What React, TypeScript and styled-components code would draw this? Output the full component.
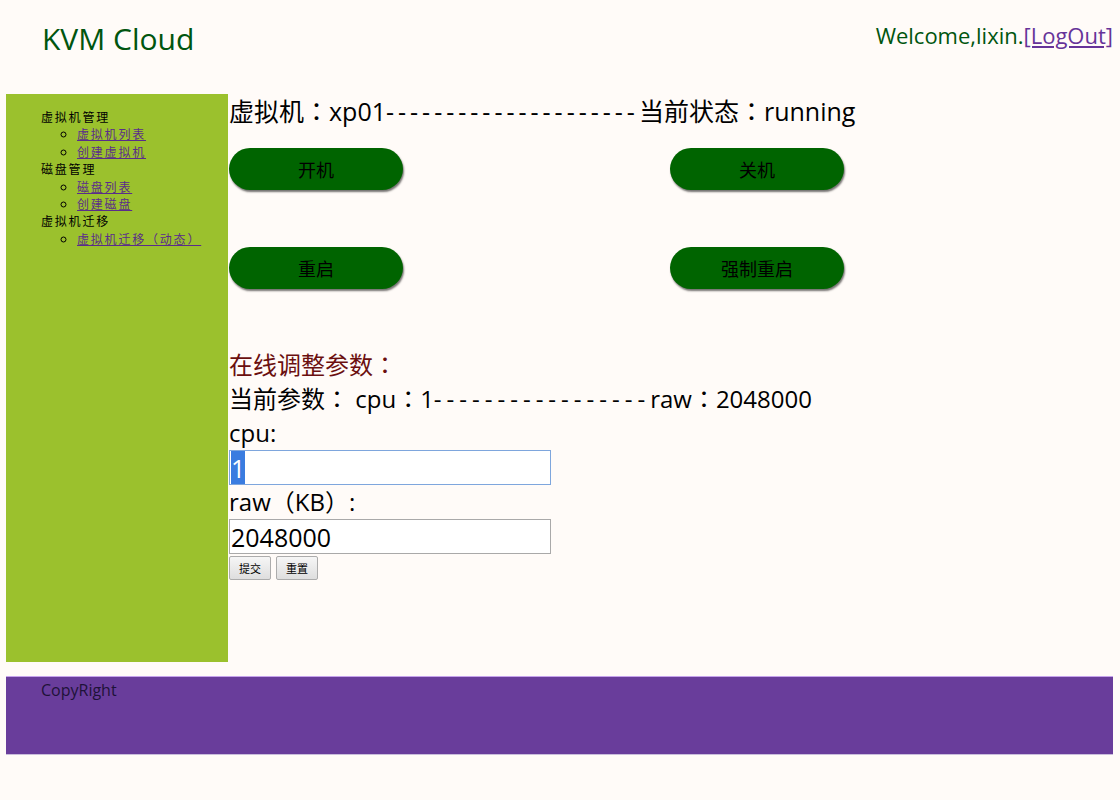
import React, { useEffect, useRef } from 'react'
import styled, { createGlobalStyle } from 'styled-components'

const GlobalStyle = createGlobalStyle`
  html, body {
    margin: 0;
    padding: 0;
    background: #fffbf8;
  }
  body {
    font-family: "Open Sans", "Noto Sans", "Noto Sans CJK TC", sans-serif;
  }
`

const Wrap = styled.div`
  margin: 0 7px 0 6px;
`

const Header = styled.header`
  height: 94px;
  display: flex;
  justify-content: space-between;
  align-items: flex-start;
`

const Logo = styled.h1`
  margin: 19px 0 0 36px;
  font-size: 30px;
  font-weight: 400;
  color: #00550f;
  line-height: 40px;
`

const Welcome = styled.div`
  margin-top: 21px;
  font-size: 22px;
  line-height: 28px;
  color: #00550f;

  a {
    color: #663399;
    text-decoration: underline;
  }
`

const Body = styled.div`
  display: flex;
  height: 568px;
`

const Sidebar = styled.nav`
  width: 222px;
  flex-shrink: 0;
  background: #9bc12d;
  padding: 14px 0 0 35px;
  box-sizing: border-box;
  font-family: "Noto Sans CJK SC", sans-serif;
  font-size: 12px;
  letter-spacing: 1.8px;
  line-height: 17.4px;
  color: #000;
`

const Group = styled.div``

const SubList = styled.ul`
  margin: 0;
  padding: 0 0 0 36px;
  list-style: circle;

  a {
    color: #5a2c8a;
    text-decoration: underline;
  }
`

const Main = styled.main`
  flex: 1;
  padding-left: 1px;
  font-family: "Open Sans", "Noto Sans CJK TC", sans-serif;
  color: #000;
`

const StatusLine = styled.div`
  font-size: 25px;
  line-height: 34px;
`

const Dashes = styled.span<{ $gap: number }>`
  letter-spacing: ${(p) => p.$gap}px;
`

const ButtonGrid = styled.div`
  display: grid;
  grid-template-columns: 441px 174px;
  row-gap: 57px;
  margin-top: 20px;
`

const PowerButton = styled.button`
  width: 174px;
  height: 42px;
  border: none;
  border-radius: 21px;
  background: #006400;
  color: #000;
  font-family: "Noto Sans CJK SC", sans-serif;
  font-size: 18px;
  box-shadow: 1px 2px 2px rgba(0, 0, 0, 0.55);
  cursor: pointer;
  padding: 0;
`

const SectionTitle = styled.div`
  margin-top: 59px;
  font-size: 24px;
  line-height: 34px;
  color: #6b0f0f;
`

const Line = styled.div`
  font-size: 24px;
  line-height: 34px;
`

const Field = styled.input<{ $focused?: boolean }>`
  display: block;
  width: 322px;
  height: 35px;
  box-sizing: border-box;
  border: 1px solid ${(p) => (p.$focused ? '#7ea6dd' : '#a9a9a9')};
  background: #fff;
  font-family: "Open Sans", sans-serif;
  font-size: 25px;
  padding: 0 1px;
  outline: none;
  color: #000;

  &::selection {
    background: #3a7ce0;
    color: #fff;
  }
`

const FormButtons = styled.div`
  display: flex;
  gap: 5px;
  margin-top: 2px;
`

const SmallButton = styled.button`
  height: 24px;
  padding: 0 9px;
  font-family: "Noto Sans CJK SC", sans-serif;
  font-size: 11px;
  background: linear-gradient(#f6f6f6, #dedede);
  border: 1px solid #acacac;
  border-radius: 2px;
  color: #000;
`

const Footer = styled.footer`
  margin-top: 14px;
  height: 79px;
  background: #693d9b;
  border-top: 1px solid #c6a3ec;
  border-bottom: 1px solid #c9bddb;
  box-sizing: border-box;
  padding: 2px 0 0 35px;
  font-size: 16px;
  color: #1e1238;
`

export default function App(): JSX.Element {
  const cpuRef = useRef<HTMLInputElement>(null)

  useEffect(() => {
    cpuRef.current?.focus()
    cpuRef.current?.select()
  }, [])

  return (
    <>
      <GlobalStyle />
      <Wrap>
        <Header>
          <Logo>KVM Cloud</Logo>
          <Welcome>
            Welcome,lixin.<a href='#'>[LogOut]</a>
          </Welcome>
        </Header>

        <Body>
          <Sidebar>
            <Group>
              虚拟机管理
              <SubList>
                <li><a href='#'>虚拟机列表</a></li>
                <li><a href='#'>创建虚拟机</a></li>
              </SubList>
            </Group>
            <Group>
              磁盘管理
              <SubList>
                <li><a href='#'>磁盘列表</a></li>
                <li><a href='#'>创建磁盘</a></li>
              </SubList>
            </Group>
            <Group>
              虚拟机迁移
              <SubList>
                <li><a href='#'>虚拟机迁移（动态）</a></li>
              </SubList>
            </Group>
          </Sidebar>

          <Main>
            <StatusLine>
              虚拟机：xp01<Dashes $gap={4}>---------------------</Dashes>当前状态：running
            </StatusLine>

            <ButtonGrid>
              <PowerButton>开机</PowerButton>
              <PowerButton>关机</PowerButton>
              <PowerButton>重启</PowerButton>
              <PowerButton>强制重启</PowerButton>
            </ButtonGrid>

            <SectionTitle>在线调整参数：</SectionTitle>
            <Line>
              当前参数： cpu：1<Dashes $gap={5}>-----------------</Dashes>raw：2048000
            </Line>
            <form onSubmit={(e) => e.preventDefault()}>
              <Line>cpu:</Line>
              <Field ref={cpuRef} $focused defaultValue='1' />
              <Line>raw（KB）:</Line>
              <Field defaultValue='2048000' />
              <FormButtons>
                <SmallButton type='submit'>提交</SmallButton>
                <SmallButton type='reset'>重置</SmallButton>
              </FormButtons>
            </form>
          </Main>
        </Body>

        <Footer>CopyRight</Footer>
      </Wrap>
    </>
  )
}
